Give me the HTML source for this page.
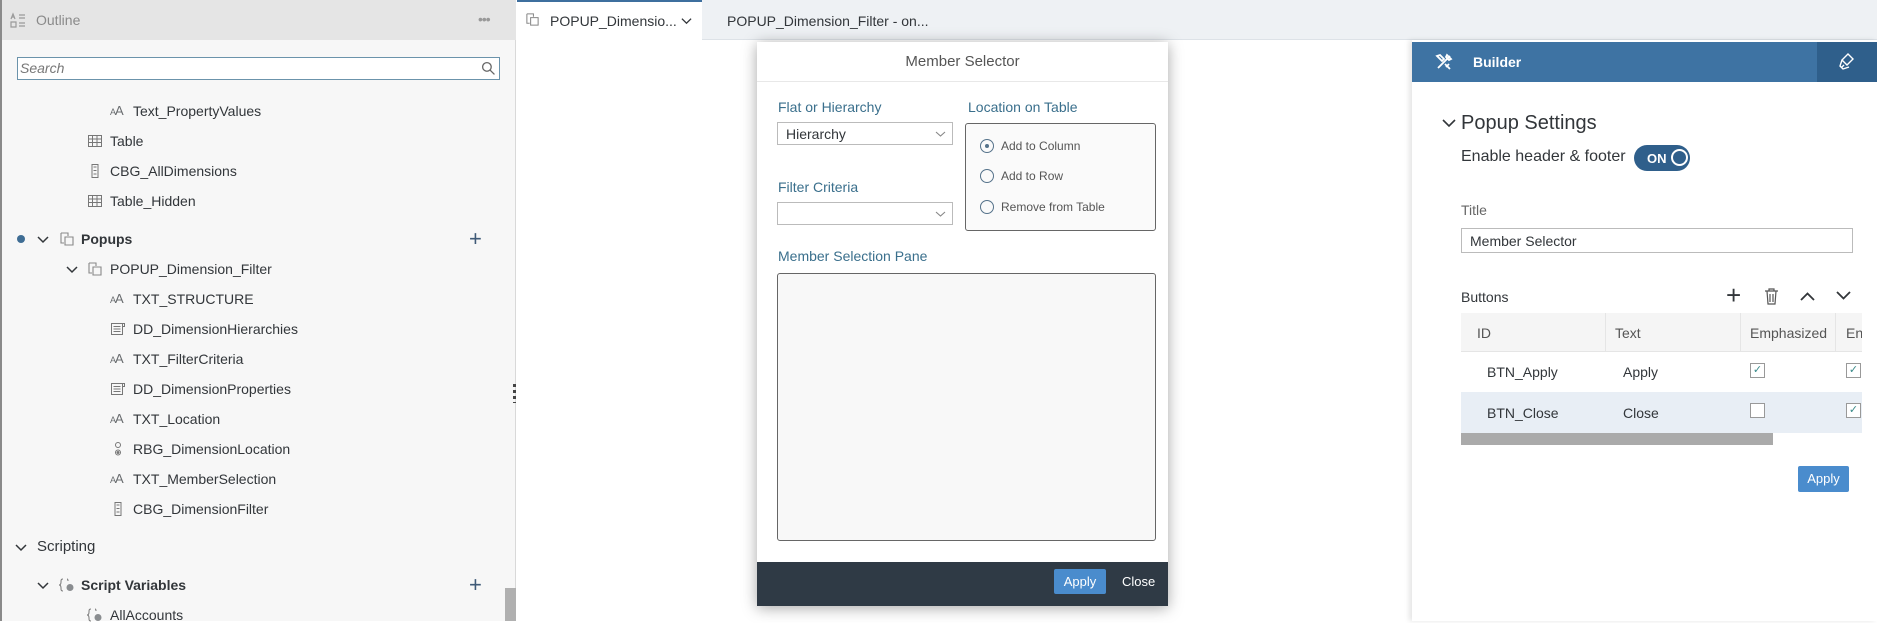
<!DOCTYPE html>
<html><head><meta charset="utf-8">
<style>
*{margin:0;padding:0;box-sizing:border-box}
body{width:1877px;height:621px;overflow:hidden;background:#fff;font-family:"Liberation Sans",sans-serif;color:#32363a;position:relative}
.a{position:absolute;white-space:nowrap}
.t{font-size:14px;line-height:16px}
.lbl{color:#3a6f8c;font-size:14px}
.aa{position:absolute;font-size:13px;color:#6a6d70;letter-spacing:-1px}
.aa small{font-size:9px}
</style></head><body>
<svg width="0" height="0" style="position:absolute">
<defs>
<symbol id="grid" viewBox="0 0 16 16"><g fill="none" stroke="#777" stroke-width="1"><rect x="1.5" y="2.5" width="13" height="11"/><path d="M1.5 6h13M1.5 9.5h13M5.5 2.5v11M10 2.5v11"/></g></symbol>
<symbol id="dd" viewBox="0 0 16 16"><g fill="none" stroke="#777" stroke-width="1"><rect x="1.5" y="2.5" width="11" height="11"/><path d="M3.5 5.5h7M3.5 8h7M3.5 10.5h7M12.5 2.5h2v3h-2"/></g></symbol>
<symbol id="cbg" viewBox="0 0 16 16"><g fill="none" stroke="#777" stroke-width="1"><rect x="5" y="1.5" width="6" height="13"/><path d="M6.5 4h3M6.5 7.5h3M6.5 11h3"/></g></symbol>
<symbol id="rbg" viewBox="0 0 16 16"><g fill="none" stroke="#777" stroke-width="1"><circle cx="8" cy="4" r="2.5"/><circle cx="8" cy="11.5" r="2.5"/><circle cx="8" cy="11.5" r="1" fill="#777"/></g></symbol>
<symbol id="sv" viewBox="0 0 18 16"><g fill="none" stroke="#777" stroke-width="1"><path d="M5 2C3 2 3 3 3 5s-1 3-2 3c1 0 2 1 2 3s0 3 2 3M9 2c1 0 1 1 1 2"/></g><circle cx="12" cy="10.5" r="3.5" fill="#8a8d90"/></symbol>
<symbol id="pop" viewBox="0 0 16 16"><path d="M2 2h7v3M2 2v10h3M6 6h8v8H6z" fill="none" stroke="#888" stroke-width="1.1"/></symbol>
</defs></svg>
<!-- left panel -->
<div class="a" style="left:0;top:0;width:516px;height:621px;background:#f7f7f7;border-right:1px solid #d9d9d9"></div>
<div class="a" style="left:0;top:0;width:516px;height:40px;background:#e5e5e5"></div>
<div class="a" style="left:0;top:0;width:2px;height:621px;background:#8a8a8a"></div>
<svg class="a" style="left:10px;top:12px" width="16" height="16" viewBox="0 0 16 16" fill="none" stroke="#9a9a9a" stroke-width="1.2"><path d="M1 7l2-5 2 5M2 5h2M9 3h6M9 6h6M1 10h5v5H1zM9 11h6M9 14h6"/></svg>
<div class="a t" style="left:36px;top:12px;color:#8a8a8a;font-size:14px">Outline</div>
<div class="a" style="left:478px;top:11px;color:#999;font-size:14px;letter-spacing:-1px">•••</div>
<div class="a" style="left:17px;top:57px;width:483px;height:23px;border:1px solid #6b93ab;background:#fff"></div>
<div class="a t" style="left:20px;top:60px;font-style:italic;color:#777">Search</div>
<svg class="a" style="left:481px;top:61px" width="14" height="14" viewBox="0 0 13 13" fill="none" stroke="#666" stroke-width="1.2"><circle cx="5.5" cy="5.5" r="4"/><path d="M8.5 8.5l4 4"/></svg>

<div class="aa" style="left:110px;top:103px"><small>A</small>A</div><div class="a t" style="left:133px;top:103px">Text_PropertyValues</div>
<svg class="a" style="left:87px;top:133px" width="16" height="16"><use href="#grid"/></svg><div class="a t" style="left:110px;top:133px">Table</div>
<svg class="a" style="left:87px;top:163px" width="16" height="16"><use href="#cbg"/></svg><div class="a t" style="left:110px;top:163px">CBG_AllDimensions</div>
<svg class="a" style="left:87px;top:193px" width="16" height="16"><use href="#grid"/></svg><div class="a t" style="left:110px;top:193px">Table_Hidden</div>

<div class="a" style="left:17px;top:235px;width:8px;height:8px;border-radius:50%;background:#3f6d94"></div>
<svg class="a" style="left:37px;top:233px" width="12" height="12" viewBox="0 0 12 12" fill="none" stroke="#32363a" stroke-width="1.5"><path d="M1 4l5 5 5-5"/></svg>
<svg class="a" style="left:59px;top:231px" width="16" height="16"><use href="#pop"/></svg>
<div class="a t" style="left:81px;top:231px;font-weight:bold">Popups</div>
<div class="a" style="left:469px;top:226px;font-size:22px;color:#3f5a77">+</div>

<svg class="a" style="left:66px;top:263px" width="12" height="12" viewBox="0 0 12 12" fill="none" stroke="#32363a" stroke-width="1.5"><path d="M1 4l5 5 5-5"/></svg>
<svg class="a" style="left:87px;top:261px" width="16" height="16"><use href="#pop"/></svg>
<div class="a t" style="left:110px;top:261px">POPUP_Dimension_Filter</div>

<div class="aa" style="left:110px;top:291px"><small>A</small>A</div><div class="a t" style="left:133px;top:291px">TXT_STRUCTURE</div>
<svg class="a" style="left:110px;top:321px" width="16" height="16"><use href="#dd"/></svg><div class="a t" style="left:133px;top:321px">DD_DimensionHierarchies</div>
<div class="aa" style="left:110px;top:351px"><small>A</small>A</div><div class="a t" style="left:133px;top:351px">TXT_FilterCriteria</div>
<svg class="a" style="left:110px;top:381px" width="16" height="16"><use href="#dd"/></svg><div class="a t" style="left:133px;top:381px">DD_DimensionProperties</div>
<div class="aa" style="left:110px;top:411px"><small>A</small>A</div><div class="a t" style="left:133px;top:411px">TXT_Location</div>
<svg class="a" style="left:110px;top:441px" width="16" height="16"><use href="#rbg"/></svg><div class="a t" style="left:133px;top:441px">RBG_DimensionLocation</div>
<div class="aa" style="left:110px;top:471px"><small>A</small>A</div><div class="a t" style="left:133px;top:471px">TXT_MemberSelection</div>
<svg class="a" style="left:110px;top:501px" width="16" height="16"><use href="#cbg"/></svg><div class="a t" style="left:133px;top:501px">CBG_DimensionFilter</div>

<svg class="a" style="left:15px;top:541px" width="12" height="12" viewBox="0 0 12 12" fill="none" stroke="#32363a" stroke-width="1.5"><path d="M1 4l5 5 5-5"/></svg>
<div class="a" style="left:37px;top:538px;font-size:15px">Scripting</div>
<svg class="a" style="left:37px;top:579px" width="12" height="12" viewBox="0 0 12 12" fill="none" stroke="#32363a" stroke-width="1.5"><path d="M1 4l5 5 5-5"/></svg>
<svg class="a" style="left:58px;top:577px" width="18" height="16"><use href="#sv"/></svg>
<div class="a t" style="left:81px;top:577px;font-weight:bold">Script Variables</div>
<div class="a" style="left:469px;top:572px;font-size:22px;color:#3f5a77">+</div>
<svg class="a" style="left:86px;top:607px" width="18" height="16"><use href="#sv"/></svg><div class="a t" style="left:110px;top:607px">AllAccounts</div>
<div class="a" style="left:513px;top:384px;width:3px;height:19px;background:repeating-linear-gradient(#444 0 3px,transparent 3px 6px)"></div>
<div class="a" style="left:505px;top:588px;width:11px;height:33px;background:#b0b0b0"></div>

<!-- tab bar -->
<div class="a" style="left:517px;top:0;width:1360px;height:40px;background:#eef1f4;border-bottom:1px solid #dde2e7"></div>
<div class="a" style="left:517px;top:0;width:185px;height:41px;background:#fff;border-top:2px solid #3e6f9e"></div>
<svg class="a" style="left:525px;top:12px" width="15" height="15"><use href="#pop"/></svg>
<div class="a t" style="left:550px;top:13px">POPUP_Dimensio...</div>
<svg class="a" style="left:681px;top:15px" width="11" height="11" viewBox="0 0 12 12" fill="none" stroke="#32363a" stroke-width="1.4"><path d="M1 4l5 5 5-5"/></svg>
<div class="a t" style="left:727px;top:13px">POPUP_Dimension_Filter - on...</div>

<!-- dialog -->
<div class="a" style="left:757px;top:42px;width:411px;height:564px;background:#fff;box-shadow:0 2px 14px rgba(0,0,0,.35)"></div>
<div class="a" style="left:757px;top:81px;width:411px;height:1px;background:#e8e8e8"></div>
<div class="a" style="left:757px;top:53px;width:411px;text-align:center;font-size:15px;color:#555">Member Selector</div>
<div class="a lbl" style="left:778px;top:99px">Flat or Hierarchy</div>
<div class="a" style="left:777px;top:122px;width:176px;height:23px;border:1px solid #bbb;background:#fff"></div>
<div class="a t" style="left:786px;top:126px">Hierarchy</div>
<svg class="a" style="left:935px;top:130px" width="11" height="8" viewBox="0 0 11 8" fill="none" stroke="#888" stroke-width="1.1"><path d="M1 2l4.5 4 4.5-4"/></svg>
<div class="a lbl" style="left:778px;top:179px">Filter Criteria</div>
<div class="a" style="left:777px;top:202px;width:176px;height:23px;border:1px solid #bbb;background:#fff"></div>
<svg class="a" style="left:935px;top:210px" width="11" height="8" viewBox="0 0 11 8" fill="none" stroke="#888" stroke-width="1.1"><path d="M1 2l4.5 4 4.5-4"/></svg>
<div class="a lbl" style="left:968px;top:99px">Location on Table</div>
<div class="a" style="left:965px;top:123px;width:191px;height:108px;border:1px solid #666;border-radius:3px;background:#fafafa"></div>
<div class="a" style="left:980px;top:139px;width:14px;height:14px;border:1.3px solid #55728a;border-radius:50%"></div>
<div class="a" style="left:985px;top:144px;width:4px;height:4px;background:#55728a;border-radius:50%"></div>
<div class="a" style="left:1001px;top:139px;font-size:12px;color:#555">Add to Column</div>
<div class="a" style="left:980px;top:169px;width:14px;height:14px;border:1.3px solid #55728a;border-radius:50%"></div>
<div class="a" style="left:1001px;top:169px;font-size:12px;color:#555">Add to Row</div>
<div class="a" style="left:980px;top:200px;width:14px;height:14px;border:1.3px solid #55728a;border-radius:50%"></div>
<div class="a" style="left:1001px;top:200px;font-size:12px;color:#555">Remove from Table</div>
<div class="a lbl" style="left:778px;top:248px">Member Selection Pane</div>
<div class="a" style="left:777px;top:273px;width:379px;height:268px;border:1px solid #666;border-radius:3px;background:#f8f8f8"></div>
<div class="a" style="left:757px;top:562px;width:411px;height:44px;background:#2f3a45"></div>
<div class="a" style="left:1054px;top:569px;width:52px;height:25px;background:#4a8ccd;border-radius:2px;color:#fff;font-size:13px;text-align:center;line-height:25px">Apply</div>
<div class="a" style="left:1122px;top:574px;color:#fff;font-size:13px">Close</div>

<!-- right panel -->
<div class="a" style="left:1412px;top:40px;width:465px;height:581px;background:#fff;box-shadow:-3px 0 5px rgba(0,0,0,.1)"></div>
<div class="a" style="left:1412px;top:42px;width:465px;height:40px;background:#3e73a3"></div>
<div class="a" style="left:1817px;top:42px;width:60px;height:40px;background:#2f5f8b"></div>
<svg class="a" style="left:1435px;top:53px" width="18" height="18" viewBox="0 0 18 18" fill="none" stroke="#fff" stroke-width="1.8"><path d="M3 15L15 3M12 2l4 4-2 1-3-3zM2 3l3-1 4 4-2 2-4-4zM10 11l5 5M11 14l3-3"/></svg>
<div class="a" style="left:1473px;top:54px;color:#fff;font-size:14px;font-weight:bold">Builder</div>
<svg class="a" style="left:1838px;top:52px" width="18" height="20" viewBox="0 0 18 20" fill="none" stroke="#fff" stroke-width="1.4"><path d="M10 2l5 5-6 6-5-5zM4 8l-2 6 3 3 6-2M6 13l-3 3"/></svg>
<svg class="a" style="left:1442px;top:117px" width="14" height="12" viewBox="0 0 14 12" fill="none" stroke="#32363a" stroke-width="1.6"><path d="M1 3l6 6 6-6"/></svg>
<div class="a" style="left:1461px;top:112px;font-size:20px">Popup Settings</div>
<div class="a" style="left:1461px;top:148px;font-size:16px">Enable header &amp; footer</div>
<div class="a" style="left:1634px;top:145px;width:56px;height:26px;border-radius:13px;background:#2f5f8b"></div>
<div class="a" style="left:1647px;top:151px;color:#fff;font-size:13px;font-weight:bold">ON</div>
<div class="a" style="left:1671px;top:149px;width:17px;height:17px;border-radius:50%;border:2.5px solid #fff"></div>
<div class="a t" style="left:1461px;top:202px;color:#666">Title</div>
<div class="a" style="left:1461px;top:228px;width:392px;height:25px;border:1px solid #bbb"></div>
<div class="a t" style="left:1470px;top:233px">Member Selector</div>
<div class="a t" style="left:1461px;top:289px">Buttons</div>
<div class="a" style="left:1726px;top:280px;font-size:26px;line-height:30px">+</div>
<svg class="a" style="left:1764px;top:288px" width="15" height="17" viewBox="0 0 15 17" fill="none" stroke="#555" stroke-width="1.2"><path d="M1 3h13M5 3V1h5v2M3 3l1 13h7l1-13M6 6v8M9 6v8"/></svg>
<svg class="a" style="left:1800px;top:292px" width="15" height="9" viewBox="0 0 15 9" fill="none" stroke="#32363a" stroke-width="1.8"><path d="M1 8l6.5-6.5L14 8"/></svg>
<svg class="a" style="left:1836px;top:291px" width="15" height="9" viewBox="0 0 15 9" fill="none" stroke="#32363a" stroke-width="1.8"><path d="M1 1l6.5 6.5L14 1"/></svg>
<div class="a" style="left:1461px;top:313px;width:401px;height:39px;background:#f5f5f5;border-bottom:1px solid #e5e5e5"></div>
<div class="a" style="left:1605px;top:313px;width:1px;height:39px;background:#e5e5e5"></div>
<div class="a" style="left:1740px;top:313px;width:1px;height:39px;background:#e5e5e5"></div>
<div class="a" style="left:1835px;top:313px;width:1px;height:39px;background:#e5e5e5"></div>
<div class="a t" style="left:1477px;top:325px;color:#555">ID</div>
<div class="a t" style="left:1615px;top:325px;color:#555">Text</div>
<div class="a t" style="left:1750px;top:325px;color:#555">Emphasized</div>
<div class="a t" style="left:1846px;top:325px;color:#555;width:16px;overflow:hidden">En</div>
<div class="a t" style="left:1487px;top:364px">BTN_Apply</div>
<div class="a t" style="left:1623px;top:364px">Apply</div>
<div class="a" style="left:1750px;top:363px;width:15px;height:15px;border:1px solid #999;color:#3a8a8a;font-size:11px;line-height:13px;text-align:center">✓</div>
<div class="a" style="left:1846px;top:363px;width:15px;height:15px;border:1px solid #999;color:#3a8a8a;font-size:11px;line-height:13px;text-align:center">✓</div>
<div class="a" style="left:1461px;top:392px;width:401px;height:41px;background:#e8eef5"></div>
<div class="a t" style="left:1487px;top:405px">BTN_Close</div>
<div class="a t" style="left:1623px;top:405px">Close</div>
<div class="a" style="left:1750px;top:403px;width:15px;height:15px;border:1px solid #999;background:#fff"></div>
<div class="a" style="left:1846px;top:403px;width:15px;height:15px;border:1px solid #999;background:#fff;color:#3a8a8a;font-size:11px;line-height:13px;text-align:center">✓</div>
<div class="a" style="left:1461px;top:433px;width:312px;height:12px;background:#aaa"></div>
<div class="a" style="left:1798px;top:466px;width:51px;height:26px;background:#4a8ccd;border-radius:2px;color:#fff;font-size:13px;text-align:center;line-height:26px">Apply</div>
</body></html>
